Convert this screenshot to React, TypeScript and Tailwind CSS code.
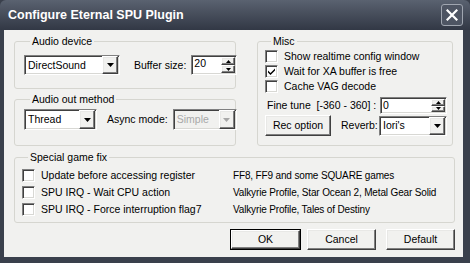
import React from 'react';

const face = 'bg-[#f1f1ef]';
const sunken =
  'border border-t-[#808080] border-l-[#808080] border-r-white border-b-white shadow-[inset_1px_1px_0_#404040,inset_-1px_-1px_0_#d8d8d4]';
const raised =
  'border border-t-white border-l-white border-r-[#404040] border-b-[#404040] shadow-[inset_-1px_-1px_0_#808080,inset_1px_1px_0_#e8e8e6]';

function Arrow({ up = false, disabled = false, small = false }: { up?: boolean; disabled?: boolean; small?: boolean }) {
  const c = disabled ? '#a8a8a8' : '#000';
  const w = small ? 5 : 7;
  const h = small ? 3 : 4;
  return (
    <svg width={w} height={h} viewBox={`0 0 ${w} ${h}`}>
      {up ? (
        <path d={`M${w / 2} 0 L${w} ${h} L0 ${h} Z`} fill={c} />
      ) : (
        <path d={`M0 0 L${w} 0 L${w / 2} ${h} Z`} fill={c} />
      )}
    </svg>
  );
}

function Combo({ value, w, h = 20, disabled = false }: { value: string; w: number; h?: number; disabled?: boolean }) {
  return (
    <div
      className={`${sunken} flex items-center shrink-0 ${disabled ? 'bg-[#f1f1ef] text-[#a8a8a8]' : 'bg-white text-black'}`}
      style={{ width: w, height: h }}
    >
      <span className="flex-1 pl-[3px] leading-none whitespace-nowrap">{value}</span>
      <div className={`${raised} ${face} w-[16px] h-full flex items-center justify-center mr-[1px] my-[1px]`}>
        <Arrow disabled={disabled} />
      </div>
    </div>
  );
}

function Spin({ value, w, h }: { value: string; w: number; h: number }) {
  return (
    <div className={`${sunken} bg-white flex shrink-0`} style={{ width: w, height: h }}>
      <span className="flex-1 pl-[2px] leading-none pt-[2px]">{value}</span>
      <div className="flex flex-col w-[15px] h-full py-[1px] pr-[1px]">
        <div className={`${raised} ${face} flex-1 flex items-center justify-center`}>
          <Arrow up small />
        </div>
        <div className={`${raised} ${face} flex-1 flex items-center justify-center`}>
          <Arrow small />
        </div>
      </div>
    </div>
  );
}

function Check({ checked = false, label }: { checked?: boolean; label: string }) {
  return (
    <div className="flex items-center gap-[6px] h-[15px]">
      <div className={`${sunken} bg-white w-[13px] h-[13px] flex items-center justify-center shrink-0`}>
        {checked && (
          <svg width="7" height="7" viewBox="0 0 7 7">
            <path d="M0 2.5 L2.5 5 L7 0.5 L7 2.5 L2.5 7 L0 4.5 Z" fill="#000" />
          </svg>
        )}
      </div>
      <span className="whitespace-nowrap">{label}</span>
    </div>
  );
}

function Group({ title, className, children }: { title: string; className?: string; children: React.ReactNode }) {
  return (
    <fieldset className={`border border-[#d6d6d0] rounded-[3px] min-w-0 ${className ?? ''}`}>
      <legend className="ml-[6px] px-[2px] leading-[13px]">{title}</legend>
      {children}
    </fieldset>
  );
}

function Button({ label, w, primary = false }: { label: string; w: number; primary?: boolean }) {
  return (
    <div className={primary ? 'border border-black' : ''}>
      <div
        className={`${raised} ${face} flex items-center justify-center whitespace-nowrap`}
        style={{ width: primary ? w - 2 : w, height: primary ? 19 : 21 }}
      >
        {label}
      </div>
    </div>
  );
}

export default function App() {
  const fixes = [
    { label: 'Update before accessing register', games: 'FF8, FF9 and some SQUARE games' },
    { label: 'SPU IRQ - Wait CPU action', games: 'Valkyrie Profile, Star Ocean 2, Metal Gear Solid' },
    { label: 'SPU IRQ - Force interruption flag7', games: 'Valkyrie Profile, Tales of Destiny' },
  ];

  return (
    <div
      className="w-[470px] h-[263px] bg-[#3a404c] flex flex-col text-[10.5px] leading-[13px] text-black"
      style={{ fontFamily: '"Liberation Sans", Arial, sans-serif' }}
    >
      {/* Title bar */}
      <div className="h-[30px] shrink-0 flex items-center justify-between pl-[8px] pr-[7px] bg-gradient-to-b from-[#5a6270] to-[#323845] rounded-t-[6px]">
        <span className="text-white font-bold text-[12.5px]">Configure Eternal SPU Plugin</span>
        <div className="w-[22px] h-[22px] rounded-[3px] border border-[#a0a6b0] bg-[#4e5563] flex items-center justify-center">
          <svg width="12" height="12" viewBox="0 0 12 12">
            <path d="M1.5 1.5 L10.5 10.5 M10.5 1.5 L1.5 10.5" stroke="#fff" strokeWidth="2.2" strokeLinecap="square" />
          </svg>
        </div>
      </div>

      {/* Body */}
      <div className={`${face} flex-1 ml-[4px] mr-[7px] mb-[6px] pl-[10px] pt-[5px] flex flex-col`}>
        <div className="grid grid-cols-[222px_196px] gap-x-[21px]">
          <div className="flex flex-col gap-[4px]">
            <Group title="Audio device" className="h-[54px] pl-[9px] pt-[7px]">
              <div className="flex items-center">
                <Combo value="DirectSound" w={96} />
                <span className="ml-[14px] mr-[5px] whitespace-nowrap">Buffer size:</span>
                <Spin value="20" w={46} h={20} />
              </div>
            </Group>
            <Group title="Audio out method" className="h-[53px] pl-[9px] pt-[3px]">
              <div className="flex items-center">
                <Combo value="Thread" w={73} h={21} />
                <span className="ml-[10px] mr-[5px] whitespace-nowrap">Async mode:</span>
                <Combo value="Simple" w={64} h={21} disabled />
              </div>
            </Group>
          </div>

          <Group title="Misc" className="h-[111px] pl-[7px] pr-[5px] pt-[1px]">
            <div className="flex flex-col">
              <Check label="Show realtime config window" />
              <Check checked label="Wait for XA buffer is free" />
              <Check label="Cache VAG decode" />
            </div>
            <div className="flex items-center mt-[3px]">
              <span className="ml-[2px] flex-1 whitespace-nowrap">Fine tune&nbsp; [-360 - 360] :</span>
              <Spin value="0" w={67} h={17} />
            </div>
            <div className="flex items-center mt-[1px]">
              <Button label="Rec option" w={66} />
              <span className="ml-[10px] flex-1">Reverb:</span>
              <Combo value="Iori's" w={68} />
            </div>
          </Group>
        </div>

        <Group title="Special game fix" className="w-[441px] h-[72px] mt-[5px] pl-[7px] pt-[4px]">
          <div className="flex flex-col gap-[2px]">
            {fixes.map((f) => (
              <div key={f.label} className="flex items-center">
                <div className="w-[211px]">
                  <Check label={f.label} />
                </div>
                <span className="whitespace-nowrap text-[10px] tracking-[-0.15px]">{f.games}</span>
              </div>
            ))}
          </div>
        </Group>

        <div className="flex mt-[6px] pl-[216px]">
          <Button label="OK" w={71} primary />
          <div className="ml-[6px]">
            <Button label="Cancel" w={69} />
          </div>
          <div className="ml-[10px]">
            <Button label="Default" w={69} />
          </div>
        </div>
      </div>
    </div>
  );
}
